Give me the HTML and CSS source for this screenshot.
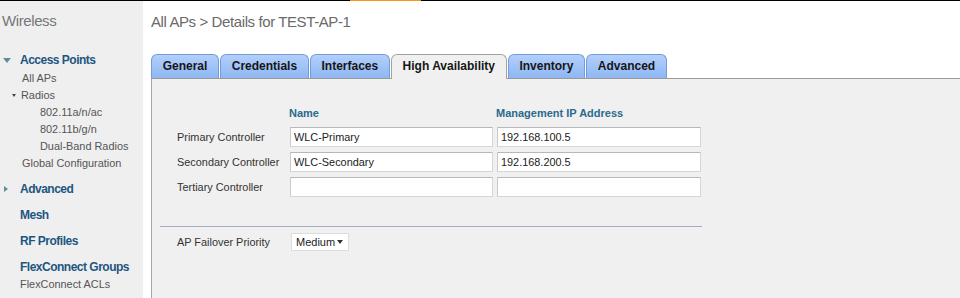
FILE: index.html
```html
<!DOCTYPE html>
<html>
<head>
<meta charset="utf-8">
<title>All APs &gt; Details for TEST-AP-1</title>
<link rel="stylesheet" href="styles.css">
</head>
<body>
<div class="topline"><span class="topline-active"></span></div>
<div class="app">
  <nav class="sidebar">
    <div class="brand">Wireless</div>
    <div class="nav-head first"><span class="marker"><span class="tri-down"></span></span>Access Points</div>
    <ul class="sublist">
      <li class="sub">All APs</li>
      <li class="sub caret-item"><span class="tri-down-sm"></span>Radios</li>
      <li class="sub deep">802.11a/n/ac</li>
      <li class="sub deep">802.11b/g/n</li>
      <li class="sub deep">Dual-Band Radios</li>
      <li class="sub">Global Configuration</li>
    </ul>
    <div class="nav-head"><span class="marker"><span class="tri-right"></span></span>Advanced</div>
    <div class="nav-head plain">Mesh</div>
    <div class="nav-head plain">RF Profiles</div>
    <div class="nav-head plain">FlexConnect Groups</div>
    <ul class="sublist tail">
      <li class="sub flat">FlexConnect ACLs</li>
    </ul>
  </nav>
  <main class="content">
    <h1 class="title">All APs &gt; Details for TEST-AP-1</h1>
    <div class="tabs">
      <div class="tab">General</div>
      <div class="tab">Credentials</div>
      <div class="tab">Interfaces</div>
      <div class="tab active">High Availability</div>
      <div class="tab">Inventory</div>
      <div class="tab">Advanced</div>
    </div>
    <section class="panel">
      <div class="form-grid">
        <span></span>
        <span class="colhead">Name</span>
        <span class="colhead">Management IP Address</span>

        <label class="row-label">Primary Controller</label>
        <input class="field" type="text" value="WLC-Primary">
        <input class="field" type="text" value="192.168.100.5">

        <label class="row-label">Secondary Controller</label>
        <input class="field" type="text" value="WLC-Secondary">
        <input class="field" type="text" value="192.168.200.5">

        <label class="row-label">Tertiary Controller</label>
        <input class="field" type="text" value="">
        <input class="field" type="text" value="">
      </div>
      <hr class="divider">
      <div class="form-grid failover">
        <label class="row-label">AP Failover Priority</label>
        <div class="select"><span class="select-text">Medium</span><span class="select-caret"></span></div>
      </div>
    </section>
  </main>
</div>
</body>
</html>
```
FILE: styles.css
```css
html, body {
  margin: 0;
  padding: 0;
  background: #ffffff;
  font-family: "Liberation Sans", Arial, sans-serif;
  overflow: hidden;
}

.topline {
  height: 1px;
  background: #000000;
  display: flex;
}

.topline-active {
  margin-left: 350px;
  width: 71px;
  background: #f7941d;
}

.app {
  display: flex;
  height: 297px;
}

/* ---------- sidebar ---------- */
.sidebar {
  width: 143px;
  flex: none;
  background: #efefef;
}

.brand {
  margin: 11px 0 0 2px;
  font-size: 15px;
  letter-spacing: -0.4px;
  line-height: 18px;
  color: #777777;
}

.nav-head {
  display: flex;
  align-items: center;
  margin-top: 8px;
  height: 18px;
  font-size: 12px;
  font-weight: bold;
  letter-spacing: -0.5px;
  color: #1d5681;
}

.nav-head.first {
  margin-top: 21px;
}

.nav-head.plain {
  padding-left: 20px;
}

.marker {
  width: 20px;
  flex: none;
  display: flex;
  align-items: center;
}

.tri-down {
  margin-left: 3px;
  width: 0;
  height: 0;
  border-left: 4px solid transparent;
  border-right: 4px solid transparent;
  border-top: 5px solid #5b8e9e;
}

.tri-right {
  margin-left: 4px;
  width: 0;
  height: 0;
  border-top: 3.5px solid transparent;
  border-bottom: 3.5px solid transparent;
  border-left: 4px solid #5b8e9e;
}

.sublist {
  list-style: none;
  margin: 1px 0 0 0;
  padding: 0;
}

.sublist.tail {
  margin-top: 0;
}

.sub {
  padding-left: 22px;
  height: 17px;
  line-height: 17px;
  font-size: 10.9px;
  color: #555555;
  white-space: nowrap;
}

.sub.flat {
  padding-left: 20px;
}

.sub.deep {
  padding-left: 40px;
}

.sub.caret-item {
  padding-left: 12px;
  display: flex;
  align-items: center;
}

.tri-down-sm {
  width: 0;
  height: 0;
  margin-right: 5px;
  border-left: 2.5px solid transparent;
  border-right: 2.5px solid transparent;
  border-top: 3px solid #444444;
}

/* ---------- content ---------- */
.content {
  flex: 1;
  display: flex;
  flex-direction: column;
  padding-left: 8px;
}

.title {
  margin: 12px 0 0 0;
  font-size: 15px;
  font-weight: normal;
  letter-spacing: -0.4px;
  line-height: 18px;
  color: #6a6a6a;
}

.tabs {
  margin-top: 23px;
  height: 24px;
  display: flex;
  align-items: flex-start;
  gap: 1px;
  border-bottom: 1px solid #9a9a9a;
}

.tab {
  box-sizing: border-box;
  height: 24px;
  padding: 0 10.7px;
  line-height: 23px;
  font-size: 12px;
  font-weight: bold;
  color: #161616;
  white-space: nowrap;
  background: linear-gradient(#b3cffb, #8eb7f3);
  border: 1px solid #729dd9;
  border-bottom: none;
  border-radius: 6px 6px 0 0;
}

.tab.active {
  height: 25px;
  margin-bottom: -1px;
  background: #f0f0f0;
  border-color: #a3a3a3;
}

.panel {
  flex: 1;
  background: #f0f0f0;
  border-left: 1px solid #a6a6a6;
  padding-top: 27px;
}

.form-grid {
  display: grid;
  grid-template-columns: 109px 203px 204px;
  column-gap: 4px;
  row-gap: 5px;
  align-items: center;
  padding-left: 25px;
}

.colhead {
  margin-left: -1px;
  margin-bottom: 2px;
  line-height: 14px;
  font-size: 11px;
  font-weight: bold;
  color: #2a6a8e;
  white-space: nowrap;
}

.row-label {
  font-size: 10.9px;
  color: #333333;
  white-space: nowrap;
}

.field {
  box-sizing: border-box;
  height: 20px;
  width: 100%;
  margin: 0;
  padding: 0 3px;
  border: 1px solid #d6d6d6;
  border-top-color: #b8b8b8;
  border-left-color: #cacaca;
  background: #ffffff;
  font-family: "Liberation Sans", Arial, sans-serif;
  font-size: 10.9px;
  color: #222222;
  outline: none;
}

.divider {
  margin: 29px 0 0 8px;
  width: 542px;
  height: 0;
  border: none;
  border-top: 1px solid #a4acc2;
}

.failover {
  margin-top: 6px;
}

.select {
  box-sizing: border-box;
  width: 58px;
  height: 18px;
  margin-left: 1px;
  display: flex;
  align-items: center;
  justify-content: space-between;
  padding: 0 5px 0 4px;
  background: #ffffff;
  border: 1px solid #dddddd;
}

.select-text {
  font-size: 11px;
  color: #222222;
}

.select-caret {
  width: 0;
  height: 0;
  border-left: 3px solid transparent;
  border-right: 3px solid transparent;
  border-top: 4px solid #333333;
}
```
